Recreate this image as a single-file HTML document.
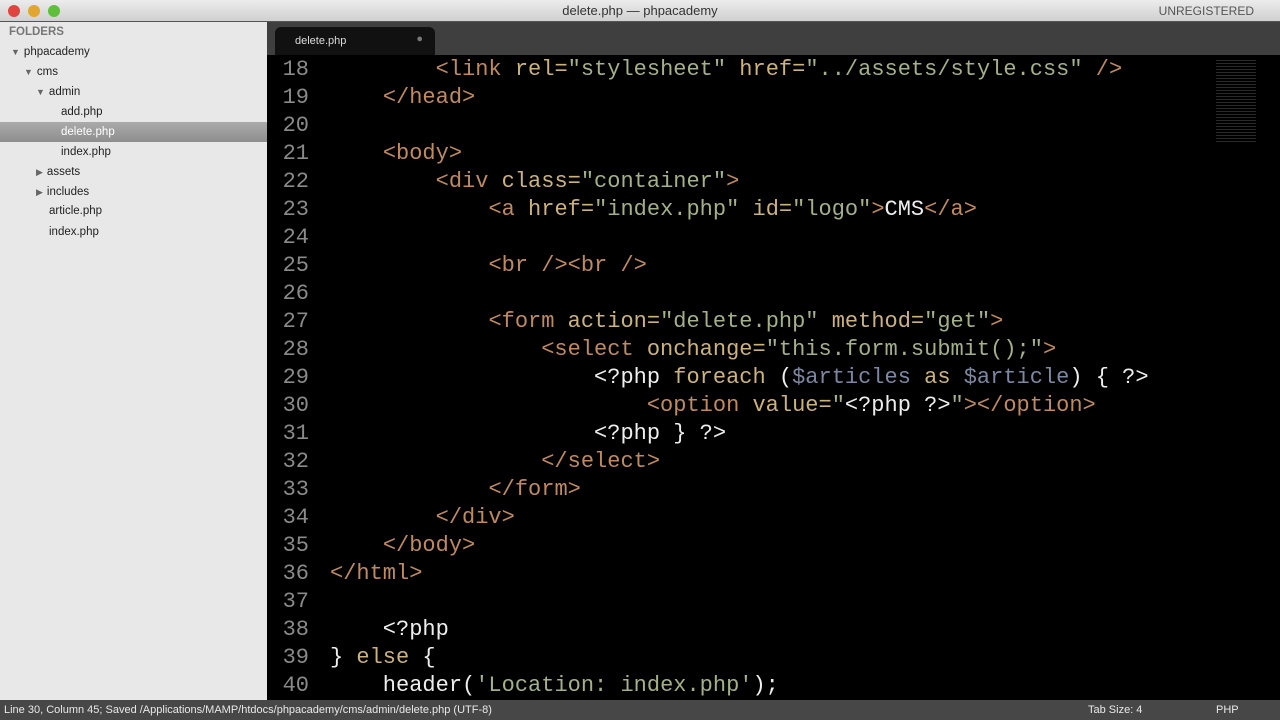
<!DOCTYPE html>
<html><head><meta charset="utf-8"><style>
*{margin:0;padding:0;box-sizing:border-box}
body{width:1280px;height:720px;overflow:hidden;background:#000;font-family:"Liberation Sans",sans-serif;position:relative}
#title{position:absolute;left:0;top:0;width:1280px;height:22px;background:linear-gradient(#ececec,#d0d0d0);border-bottom:1px solid #555;font-size:13px;color:#333;text-align:center;line-height:22px}
.dot{position:absolute;top:5px;width:12px;height:12px;border-radius:50%}
#side{position:absolute;left:0;top:22px;width:267px;height:678px;background:#e8e8e8;font-size:11.5px;color:#222}
#side div{position:absolute;height:20px;line-height:20px;white-space:nowrap}
.tri{color:#666;font-size:9px;margin-right:4px}
#tabs{position:absolute;left:267px;top:22px;width:1013px;height:33px;background:#3f3f3f}
#tab{position:absolute;left:8px;top:5px;width:160px;height:28px;background:#111;border-radius:6px 6px 0 0;color:#ddd;font-size:11px;padding:8px 0 0 20px}
#code{position:absolute;left:267px;top:56px;width:1013px;height:644px;background:#000;font-family:"Liberation Mono",monospace;font-size:22px;color:#eee}
.l{position:absolute;left:0;height:28px;line-height:28px;white-space:pre;width:1000px}
.n{display:inline-block;width:42px;text-align:right;color:#8a8a8a;margin-right:21px}
.t{color:#bd8a62}.a{color:#cbb27f}.s{color:#a3b088}.v{color:#7c87a2}.k{color:#cbb27f}
#status{position:absolute;left:0;top:700px;width:1280px;height:20px;background:#474747;color:#e8e8e8;font-size:11px;line-height:20px;padding-left:4px}
#mini{position:absolute;left:1216px;top:58px;width:40px;height:86px;opacity:.5;background:repeating-linear-gradient(#000 0 2px,#555 2px 3px)}
</style></head><body>
<div id="title"><span class="dot" style="left:8px;background:#e0443e"></span><span class="dot" style="left:28px;background:#e2a52f"></span><span class="dot" style="left:48px;background:#5fbf3b"></span>delete.php — phpacademy<span style="position:absolute;right:26px;top:0;color:#555;font-size:12px">UNREGISTERED</span></div>
<div id="side">
<div style="left:9px;top:0;font-weight:bold;color:#777">FOLDERS</div>
<div style="left:11px;top:20px"><span class="tri">▼</span>phpacademy</div>
<div style="left:24px;top:40px"><span class="tri">▼</span>cms</div>
<div style="left:36px;top:60px"><span class="tri">▼</span>admin</div>
<div style="left:61px;top:80px">add.php</div>
<div style="left:0;top:100px;width:267px;background:linear-gradient(#aaa,#8e8e8e);color:#fff;padding-left:61px">delete.php</div>
<div style="left:61px;top:120px">index.php</div>
<div style="left:36px;top:140px"><span class="tri">▶</span>assets</div>
<div style="left:36px;top:160px"><span class="tri">▶</span>includes</div>
<div style="left:49px;top:179px">article.php</div>
<div style="left:49px;top:200px">index.php</div>
</div>
<div id="tabs"><div id="tab">delete.php<span style="position:absolute;right:12px;top:6px;color:#777">●</span></div></div>
<div id="code">
<div class="l" style="top:0"><span class="n">18</span>        <span class="t">&lt;link</span> <span class="a">rel=</span><span class="s">"stylesheet"</span> <span class="a">href=</span><span class="s">"../assets/style.css"</span> <span class="t">/&gt;</span></div>
<div class="l" style="top:28px"><span class="n">19</span>    <span class="t">&lt;/head&gt;</span></div>
<div class="l" style="top:56px"><span class="n">20</span></div>
<div class="l" style="top:84px"><span class="n">21</span>    <span class="t">&lt;body&gt;</span></div>
<div class="l" style="top:112px"><span class="n">22</span>        <span class="t">&lt;div</span> <span class="a">class=</span><span class="s">"container"</span><span class="t">&gt;</span></div>
<div class="l" style="top:140px"><span class="n">23</span>            <span class="t">&lt;a</span> <span class="a">href=</span><span class="s">"index.php"</span> <span class="a">id=</span><span class="s">"logo"</span><span class="t">&gt;</span>CMS<span class="t">&lt;/a&gt;</span></div>
<div class="l" style="top:168px"><span class="n">24</span></div>
<div class="l" style="top:196px"><span class="n">25</span>            <span class="t">&lt;br /&gt;&lt;br /&gt;</span></div>
<div class="l" style="top:224px"><span class="n">26</span></div>
<div class="l" style="top:252px"><span class="n">27</span>            <span class="t">&lt;form</span> <span class="a">action=</span><span class="s">"delete.php"</span> <span class="a">method=</span><span class="s">"get"</span><span class="t">&gt;</span></div>
<div class="l" style="top:280px"><span class="n">28</span>                <span class="t">&lt;select</span> <span class="a">onchange=</span><span class="s">"this.form.submit();"</span><span class="t">&gt;</span></div>
<div class="l" style="top:308px"><span class="n">29</span>                    &lt;?php <span class="k">foreach</span> (<span class="v">$articles</span> <span class="k">as</span> <span class="v">$article</span>) { ?&gt;</div>
<div class="l" style="top:336px"><span class="n">30</span>                        <span class="t">&lt;option</span> <span class="a">value=</span><span class="s">"</span>&lt;?php ?&gt;<span class="s">"</span><span class="t">&gt;&lt;/option&gt;</span></div>
<div class="l" style="top:364px"><span class="n">31</span>                    &lt;?php } ?&gt;</div>
<div class="l" style="top:392px"><span class="n">32</span>                <span class="t">&lt;/select&gt;</span></div>
<div class="l" style="top:420px"><span class="n">33</span>            <span class="t">&lt;/form&gt;</span></div>
<div class="l" style="top:448px"><span class="n">34</span>        <span class="t">&lt;/div&gt;</span></div>
<div class="l" style="top:476px"><span class="n">35</span>    <span class="t">&lt;/body&gt;</span></div>
<div class="l" style="top:504px"><span class="n">36</span><span class="t">&lt;/html&gt;</span></div>
<div class="l" style="top:532px"><span class="n">37</span></div>
<div class="l" style="top:560px"><span class="n">38</span>    &lt;?php</div>
<div class="l" style="top:588px"><span class="n">39</span>} <span class="k">else</span> {</div>
<div class="l" style="top:616px"><span class="n">40</span>    header(<span class="s">'Location: index.php'</span>);</div>
</div>
<div id="mini"></div>
<div id="status">Line 30, Column 45; Saved /Applications/MAMP/htdocs/phpacademy/cms/admin/delete.php (UTF-8)<span style="position:absolute;left:1088px">Tab Size: 4</span><span style="position:absolute;left:1216px">PHP</span></div>
</body></html>
